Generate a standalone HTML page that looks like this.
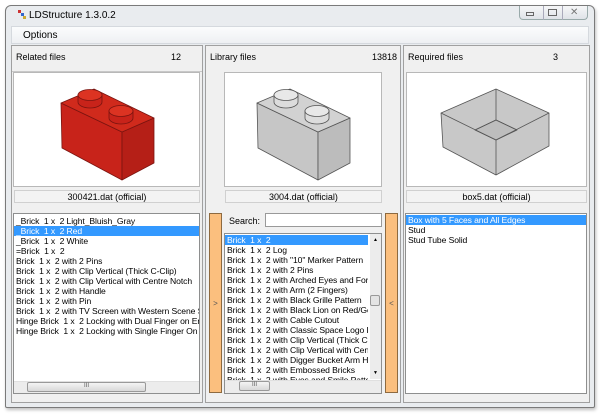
<!DOCTYPE html>
<html><head><style>
*{margin:0;padding:0;box-sizing:border-box}
body{width:600px;height:415px;background:#fff;font-family:"Liberation Sans",sans-serif;font-size:9px;color:#000;position:relative;overflow:hidden}
.a{position:absolute}
.win{left:5px;top:5px;width:590px;height:403px;border:1px solid #7a7a7a;border-radius:6px 6px 2px 2px;background:#e9ecef;box-shadow:1px 2px 3px rgba(0,0,0,.25)}
.menu{left:11px;top:26px;width:578px;height:18px;background:linear-gradient(#fbfcfd,#eef0f3);border:1px solid #d5d9de}
.panel{background:#f0f0f0;border:1px solid #a0a0a0}
.hdr{border-bottom:1px solid #c8c8c8}
.img{background:#fff;border:1px solid #b8b8b8}
.lbl{background:#f3f3f3;border:1px solid #d0d0d0;text-align:center;line-height:12px}
.list{background:#fff;border:1px solid #8e8f8f}
.row{height:10px;line-height:10px;white-space:nowrap;overflow:hidden;padding-left:2px;font-size:8.6px;letter-spacing:-0.1px}
.sel{background:#3399ff;color:#fff}
.org{background:#fbbf7e;border:1px solid #8d6a40;color:#555;font-size:8px;text-align:center}
.hs{background:#ececec;border-top:1px solid #e0e0e0}
</style></head><body>
<div class="a win"></div>
<div class="a" style="left:18px;top:10px;width:10px;height:10px">
<div class="a" style="left:0;top:0;width:3px;height:3px;background:#c33"></div>
<div class="a" style="left:3px;top:3px;width:3px;height:3px;background:#36c"></div>
<div class="a" style="left:5px;top:6px;width:3px;height:3px;background:#ca3"></div>
</div>
<div class="a" style="left:29px;top:10px;font-size:10px">LDStructure 1.3.0.2</div>
<div class="a" style="left:519px;top:6px;width:69px;height:14px;border:1px solid #9aa;border-top:none;border-radius:0 0 4px 4px;background:linear-gradient(#f6f7f8,#dfe3e8)"></div>
<div class="a" style="left:543px;top:6px;width:1px;height:14px;background:#aab"></div>
<div class="a" style="left:562px;top:6px;width:1px;height:14px;background:#aab"></div>
<div class="a" style="left:526px;top:12px;width:8px;height:4px;border:1px solid #666"></div>
<div class="a" style="left:548px;top:9px;width:9px;height:7px;border:1px solid #666"></div>
<div class="a" style="left:570px;top:7px;font-size:10px;color:#777">✕</div>
<div class="a menu"></div>
<div class="a" style="left:23px;top:30px;font-size:10px">Options</div>

<div class="a panel" style="left:11px;top:45px;width:192px;height:358px"></div>
<div class="a hdr" style="left:12px;top:71px;width:190px;height:1px"></div>
<div class="a" style="left:16px;top:52px">Related files</div>
<div class="a" style="left:171px;top:52px">12</div>
<div class="a img" style="left:13px;top:72px;width:187px;height:115px"></div>
<div class="a lbl" style="left:14px;top:190px;width:186px;height:13px">300421.dat (official)</div>
<div class="a list" style="left:13px;top:213px;width:187px;height:181px;padding-top:2px">
<div class="row">_Brick&nbsp; 1 x&nbsp; 2 Light_Bluish_Gray</div>
<div class="row sel">_Brick&nbsp; 1 x&nbsp; 2 Red</div>
<div class="row">_Brick&nbsp; 1 x&nbsp; 2 White</div>
<div class="row">=Brick&nbsp; 1 x&nbsp; 2</div>
<div class="row">Brick&nbsp; 1 x&nbsp; 2 with 2 Pins</div>
<div class="row">Brick&nbsp; 1 x&nbsp; 2 with Clip Vertical (Thick C-Clip)</div>
<div class="row">Brick&nbsp; 1 x&nbsp; 2 with Clip Vertical with Centre Notch</div>
<div class="row">Brick&nbsp; 1 x&nbsp; 2 with Handle</div>
<div class="row">Brick&nbsp; 1 x&nbsp; 2 with Pin</div>
<div class="row">Brick&nbsp; 1 x&nbsp; 2 with TV Screen with Western Scene St</div>
<div class="row">Hinge Brick&nbsp; 1 x&nbsp; 2 Locking with Dual Finger on End</div>
<div class="row">Hinge Brick&nbsp; 1 x&nbsp; 2 Locking with Single Finger On Er</div>
</div>
<div class="a hs" style="left:14px;top:381px;width:185px;height:12px"></div>
<div class="a" style="left:27px;top:382px;width:119px;height:10px;border:1px solid #999;border-radius:2px;background:linear-gradient(#f4f4f4,#d8d8d8);font-size:6px;text-align:center;color:#555">III</div>

<div class="a panel" style="left:205px;top:45px;width:196px;height:358px"></div>
<div class="a" style="left:210px;top:52px">Library files</div>
<div class="a" style="left:372px;top:52px">13818</div>
<div class="a img" style="left:224px;top:72px;width:158px;height:115px"></div>
<div class="a lbl" style="left:225px;top:190px;width:157px;height:13px">3004.dat (official)</div>
<div class="a org" style="left:209px;top:213px;width:13px;height:180px;line-height:180px">&gt;</div>
<div class="a org" style="left:385px;top:213px;width:13px;height:180px;line-height:180px">&lt;</div>
<div class="a" style="left:229px;top:216px">Search:</div>
<div class="a" style="left:265px;top:213px;width:117px;height:14px;background:#fff;border:1px solid #999"></div>
<div class="a list" style="left:224px;top:233px;width:158px;height:161px;padding-top:1px">
<div class="row sel" style="width:143px">Brick&nbsp; 1 x&nbsp; 2</div>
<div class="row" style="width:143px">Brick&nbsp; 1 x&nbsp; 2 Log</div>
<div class="row" style="width:143px">Brick&nbsp; 1 x&nbsp; 2 with "10" Marker Pattern</div>
<div class="row" style="width:143px">Brick&nbsp; 1 x&nbsp; 2 with 2 Pins</div>
<div class="row" style="width:143px">Brick&nbsp; 1 x&nbsp; 2 with Arched Eyes and Forehead</div>
<div class="row" style="width:143px">Brick&nbsp; 1 x&nbsp; 2 with Arm (2 Fingers)</div>
<div class="row" style="width:143px">Brick&nbsp; 1 x&nbsp; 2 with Black Grille Pattern</div>
<div class="row" style="width:143px">Brick&nbsp; 1 x&nbsp; 2 with Black Lion on Red/Gold</div>
<div class="row" style="width:143px">Brick&nbsp; 1 x&nbsp; 2 with Cable Cutout</div>
<div class="row" style="width:143px">Brick&nbsp; 1 x&nbsp; 2 with Classic Space Logo Pattern</div>
<div class="row" style="width:143px">Brick&nbsp; 1 x&nbsp; 2 with Clip Vertical (Thick C-Clip)</div>
<div class="row" style="width:143px">Brick&nbsp; 1 x&nbsp; 2 with Clip Vertical with Centre</div>
<div class="row" style="width:143px">Brick&nbsp; 1 x&nbsp; 2 with Digger Bucket Arm Holder</div>
<div class="row" style="width:143px">Brick&nbsp; 1 x&nbsp; 2 with Embossed Bricks</div>
<div class="row" style="width:143px">Brick&nbsp; 1 x&nbsp; 2 with Eyes and Smile Pattern</div>
</div>
<div class="a" style="left:370px;top:234px;width:11px;height:145px;background:#ececec"></div>
<div class="a" style="left:370px;top:295px;width:10px;height:11px;border:1px solid #999;background:#e4e4e4;border-radius:2px"></div>
<div class="a" style="left:373px;top:237px;font-size:5px">▲</div>
<div class="a" style="left:373px;top:370px;font-size:5px">▼</div>
<div class="a hs" style="left:225px;top:380px;width:156px;height:13px"></div>
<div class="a" style="left:239px;top:381px;width:31px;height:10px;border:1px solid #999;border-radius:2px;background:linear-gradient(#f4f4f4,#d8d8d8);font-size:6px;text-align:center;color:#555">III</div>

<div class="a panel" style="left:403px;top:45px;width:187px;height:358px"></div>
<div class="a" style="left:408px;top:52px">Required files</div>
<div class="a" style="left:553px;top:52px">3</div>
<div class="a img" style="left:406px;top:72px;width:181px;height:115px"></div>
<div class="a lbl" style="left:406px;top:190px;width:181px;height:13px">box5.dat (official)</div>
<div class="a list" style="left:405px;top:213px;width:182px;height:181px;padding-top:1px">
<div class="row sel">Box with 5 Faces and All Edges</div>
<div class="row">Stud</div>
<div class="row">Stud Tube Solid</div>
</div>

<svg class="a" style="left:0;top:0" width="600" height="415">
<g stroke="#7a1410" stroke-width="0.8" stroke-linejoin="round">
<polygon points="61,103 122,132 122,180 62,148" fill="#c8231a"/>
<polygon points="122,132 154,118 154,163 122,180" fill="#b51f17"/>
<polygon points="61,103 94,89 154,118 122,132" fill="#d02a1c"/>
<path d="M78,95 v7 a12,6 0 0 0 24,0 v-7 z" fill="#c8231a"/>
<ellipse cx="90" cy="95" rx="12" ry="5.5" fill="#dc3322"/>
<path d="M109,111 v7 a12,6 0 0 0 24,0 v-7 z" fill="#c8231a"/>
<ellipse cx="121" cy="111" rx="12" ry="5.5" fill="#dc3322"/>
</g>
<g stroke="#555" stroke-width="0.8" stroke-linejoin="round" transform="translate(196,0)">
<polygon points="61,103 122,132 122,180 62,148" fill="#c6c6c6"/>
<polygon points="122,132 154,118 154,163 122,180" fill="#bcbcbc"/>
<polygon points="61,103 94,89 154,118 122,132" fill="#d2d2d2"/>
<path d="M78,95 v7 a12,6 0 0 0 24,0 v-7 z" fill="#dcdcdc"/>
<ellipse cx="90" cy="95" rx="12" ry="5.5" fill="#e8e8e8"/>
<path d="M109,111 v7 a12,6 0 0 0 24,0 v-7 z" fill="#dcdcdc"/>
<ellipse cx="121" cy="111" rx="12" ry="5.5" fill="#e8e8e8"/>
</g>
<g stroke="#555" stroke-width="0.8" stroke-linejoin="round">
<polygon points="441,113 496,89 549,113 549,146 496,175 443,147" fill="#c8c8c8"/>
<polygon points="496,120 475,130 496,140 517,130" fill="#bdbdbd"/>
<polyline points="441,113 496,140 549,113" fill="none"/>
<line x1="496" y1="140" x2="496" y2="175"/>
<line x1="496" y1="89" x2="496" y2="120"/>
<line x1="475" y1="130" x2="496" y2="120"/>
<line x1="517" y1="130" x2="496" y2="120"/>
</g>
</svg>
</body></html>
